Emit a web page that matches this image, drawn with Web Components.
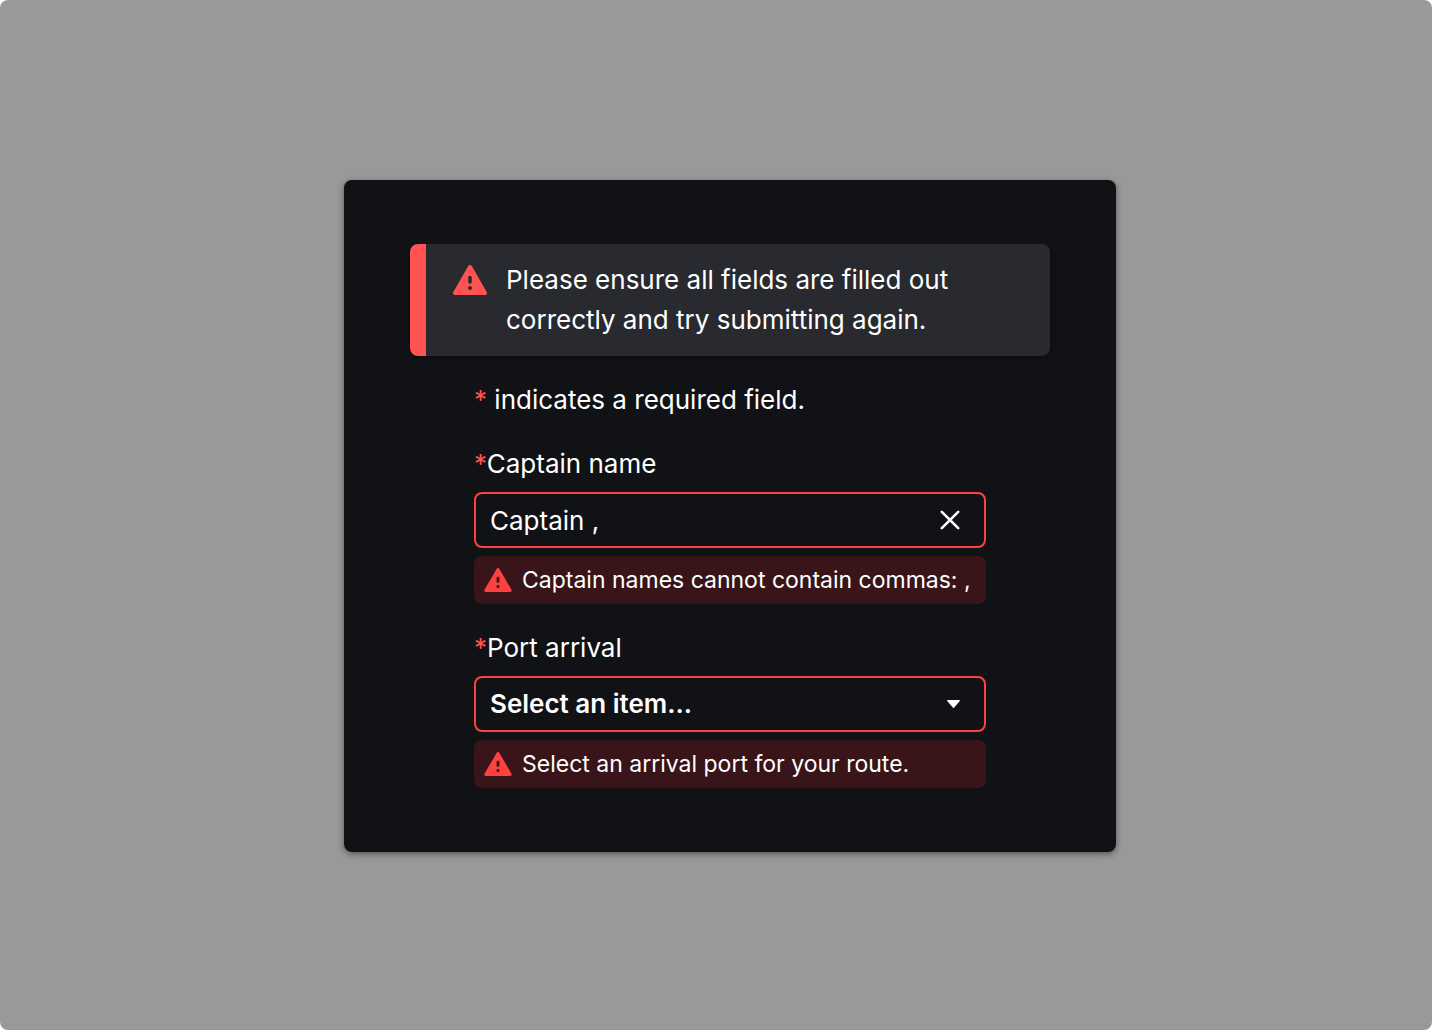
<!DOCTYPE html>
<html lang="en">
<head>
  <meta charset="utf-8">
  <meta name="viewport" content="width=device-width, initial-scale=1">
  <title>Route form</title>
  <style>
    :root {
      --danger: #ff4040;
      --danger-soft: #ff5252;
      --panel: #111216;
    }

    html {
      background: #fff;
    }

    body {
      margin: 0;
      color: #fff;
      font: 26px/40px Inter, "Open Sans", sans-serif;
    }
  </style>
</head>
<body>
  <form-stage>
    <form-panel>
      <alert-banner>Please ensure all fields are filled out correctly and try submitting again.</alert-banner>
      <form-fields>
        <required-note>indicates a required field.</required-note>
        <text-field label="Captain name" value="Captain ,">Captain names cannot contain commas: ,</text-field>
        <select-field label="Port arrival" placeholder="Select an item...">Select an arrival port for your route.</select-field>
      </form-fields>
    </form-panel>
  </form-stage>

  <script>
    class FormStage extends HTMLElement {
      constructor() {
        super();
        this.attachShadow({ mode: 'open' }).innerHTML = `
          <style>
            :host {
              display: flex;
              justify-content: center;
              align-items: center;
              box-sizing: border-box;
              min-height: 100vh;
              padding: 2px 0 0 28px;
              border-radius: 8px;
              background: #999;
            }
          </style>
          <slot></slot>
        `;
      }
    }

    class FormPanel extends HTMLElement {
      constructor() {
        super();
        this.attachShadow({ mode: 'open' }).innerHTML = `
          <style>
            :host {
              display: flex;
              flex-direction: column;
              gap: 24px;
              box-sizing: border-box;
              width: 100%;
              max-width: 772px;
              padding: 64px 66px;
              border-radius: 8px;
              background: var(--panel);
              box-shadow: 0 2px 6px rgba(0, 0, 0, 0.45);
            }
          </style>
          <slot></slot>
        `;
      }
    }

    class FormFields extends HTMLElement {
      constructor() {
        super();
        this.attachShadow({ mode: 'open' }).innerHTML = `
          <style>
            :host {
              display: flex;
              flex-direction: column;
              gap: 24px;
              padding: 0 64px;
            }
          </style>
          <slot></slot>
        `;
      }
    }

    class WarningIcon extends HTMLElement {
      constructor() {
        super();
        this.attachShadow({ mode: 'open' }).innerHTML = `
          <style>
            :host {
              display: block;
              flex: none;
              width: 28px;
              height: 24px;
              color: var(--danger);
            }

            svg {
              display: block;
              width: 100%;
              height: 100%;
            }
          </style>
          <svg viewBox="0 0 34 30" aria-hidden="true">
            <path fill="currentColor" fill-rule="evenodd" d="M15.2 1.1a2.1 2.1 0 0 1 3.6 0l14.9 25.8a2 2 0 0 1-1.8 3.1H2.1a2 2 0 0 1-1.8-3.1zM17 10.8a1.8 1.8 0 0 0-1.8 1.8v4.4a1.8 1.8 0 0 0 3.6 0v-4.4a1.8 1.8 0 0 0-1.8-1.8zm0 10.3a2 2 0 1 0 0 4 2 2 0 0 0 0-4z"/>
          </svg>
        `;
      }
    }

    class AlertBanner extends HTMLElement {
      constructor() {
        super();
        this.attachShadow({ mode: 'open' }).innerHTML = `
          <style>
            :host {
              display: block;
            }

            .banner {
              display: flex;
              gap: 19px;
              padding: 16px 64px 16px 27px;
              border-left: 16px solid var(--danger-soft);
              border-radius: 8px;
              background: #292a2f;
              box-shadow: 0 2px 4px rgba(0, 0, 0, 0.4);
            }

            warning-icon {
              width: 34px;
              height: 30px;
              margin-top: 5px;
              color: var(--danger-soft);
            }
          </style>
          <div class="banner" role="alert">
            <warning-icon></warning-icon>
            <span><slot></slot></span>
          </div>
        `;
      }
    }

    class RequiredMark extends HTMLElement {
      constructor() {
        super();
        this.attachShadow({ mode: 'open' }).innerHTML = `<style>
            :host {
              display: inline;
              color: var(--danger-soft);
            }
          </style><span>*</span>`;
      }
    }

    class RequiredNote extends HTMLElement {
      constructor() {
        super();
        this.attachShadow({ mode: 'open' }).innerHTML = `
          <style>
            :host {
              display: block;
            }
          </style>
          <required-mark></required-mark> <slot></slot>
        `;
      }
    }

    class FieldError extends HTMLElement {
      constructor() {
        super();
        this.attachShadow({ mode: 'open' }).innerHTML = `
          <style>
            :host {
              display: flex;
              align-items: center;
              gap: 10px;
              box-sizing: border-box;
              min-height: 48px;
              padding: 4px 10px;
              border-radius: 8px;
              background: #391418;
              font-size: 23px;
            }
          </style>
          <warning-icon></warning-icon>
          <span><slot></slot></span>
        `;
      }
    }

    // label, control box and box colours are the same for both field types
    const fieldStyles = `
      :host {
        display: flex;
        flex-direction: column;
        gap: 8px;
      }

      .control {
        display: flex;
        align-items: center;
        box-sizing: border-box;
        height: 56px;
        border: 2px solid var(--danger);
        border-radius: 8px;
      }

      input,
      select {
        flex: 1;
        min-width: 0;
        height: 100%;
        margin: 0;
        padding: 0 14px;
        border: 0;
        outline: 0;
        background: none;
        color: inherit;
        font: inherit;
        appearance: none;
      }
    `;

    class TextField extends HTMLElement {
      connectedCallback() {
        this.attachShadow({ mode: 'open' }).innerHTML = `
          <style>
            ${fieldStyles}
            button {
              display: flex;
              padding: 14px;
              margin-right: 10px;
              border: 0;
              background: none;
              color: inherit;
              cursor: pointer;
            }
          </style>
          <label for="field"><required-mark></required-mark>${this.getAttribute('label')}</label>
          <div class="control">
            <input id="field" type="text" required aria-invalid="true" value="${this.getAttribute('value')}">
            <button type="button" aria-label="Clear">
              <svg width="20" height="20" viewBox="0 0 20 20" fill="none" stroke="currentColor" stroke-width="2.6" stroke-linecap="round" aria-hidden="true">
                <path d="M1.8 1.8l16.4 16.4M18.2 1.8L1.8 18.2"/>
              </svg>
            </button>
          </div>
          <field-error><slot></slot></field-error>
        `;

        const input = this.shadowRoot.querySelector('input');
        this.shadowRoot.querySelector('button').addEventListener('click', () => {
          input.value = '';
          input.focus();
        });
      }
    }

    class SelectField extends HTMLElement {
      connectedCallback() {
        this.attachShadow({ mode: 'open' }).innerHTML = `
          <style>
            ${fieldStyles}
            .control {
              display: grid;
            }

            select,
            svg {
              grid-area: 1 / 1;
            }

            select {
              font-weight: 600;
              cursor: pointer;
            }

            svg {
              justify-self: end;
              margin-right: 24px;
              pointer-events: none;
            }
          </style>
          <label for="field"><required-mark></required-mark>${this.getAttribute('label')}</label>
          <div class="control">
            <select id="field" required aria-invalid="true">
              <option value="">${this.getAttribute('placeholder')}</option>
            </select>
            <svg width="13" height="8" viewBox="0 0 13 8" fill="currentColor" aria-hidden="true">
              <path d="M.6 0h11.8a.6.6 0 0 1 .4 1L7.2 7.6a.9.9 0 0 1-1.4 0L.2 1A.6.6 0 0 1 .6 0z"/>
            </svg>
          </div>
          <field-error><slot></slot></field-error>
        `;
      }
    }

    customElements.define('warning-icon', WarningIcon);
    customElements.define('required-mark', RequiredMark);
    customElements.define('field-error', FieldError);
    customElements.define('form-stage', FormStage);
    customElements.define('form-panel', FormPanel);
    customElements.define('form-fields', FormFields);
    customElements.define('alert-banner', AlertBanner);
    customElements.define('required-note', RequiredNote);
    customElements.define('text-field', TextField);
    customElements.define('select-field', SelectField);
  </script>
</body>
</html>
